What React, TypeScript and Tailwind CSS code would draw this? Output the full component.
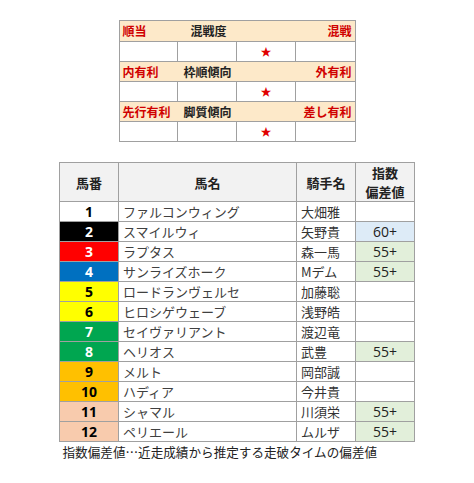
const font = { fontFamily: '"Noto Sans CJK JP", "Noto Sans", sans-serif' };

type Trend = { left: string; title: string; right: string; pad: string };

const trends: Trend[] = [
  { left: "順当", title: "混戦度", right: "混戦", pad: "w-[68px]" },
  { left: "内有利", title: "枠順傾向", right: "外有利", pad: "w-[61px]" },
  { left: "先行有利", title: "脚質傾向", right: "差し有利", pad: "w-[61px]" },
];

type Horse = { no: number; name: string; jockey: string; idx?: string; cls: string };

const horses: Horse[] = [
  { no: 1, name: "ファルコンウィング", jockey: "大畑雅", cls: "bg-white text-black" },
  { no: 2, name: "スマイルウィ", jockey: "矢野貴", idx: "60+", cls: "bg-black text-white" },
  { no: 3, name: "ラプタス", jockey: "森一馬", idx: "55+", cls: "bg-[#ff0000] text-white" },
  { no: 4, name: "サンライズホーク", jockey: "Mデム", idx: "55+", cls: "bg-[#0070c0] text-white" },
  { no: 5, name: "ロードランヴェルセ", jockey: "加藤聡", cls: "bg-[#ffff00] text-black" },
  { no: 6, name: "ヒロシゲウェーブ", jockey: "浅野皓", cls: "bg-[#ffff00] text-black" },
  { no: 7, name: "セイヴァリアント", jockey: "渡辺竜", cls: "bg-[#00a650] text-white" },
  { no: 8, name: "ヘリオス", jockey: "武豊", idx: "55+", cls: "bg-[#00a650] text-white" },
  { no: 9, name: "メルト", jockey: "岡部誠", cls: "bg-[#ffc000] text-black" },
  { no: 10, name: "ハディア", jockey: "今井貴", cls: "bg-[#ffc000] text-black" },
  { no: 11, name: "シャマル", jockey: "川須栄", idx: "55+", cls: "bg-[#f8cbad] text-black" },
  { no: 12, name: "ペリエール", jockey: "ムルザ", idx: "55+", cls: "bg-[#f8cbad] text-black" },
];

const cell = "border border-[#a0a0a0] h-[20px] p-0";

export default function App() {
  return (
    <div className="min-h-screen bg-white flex flex-col items-center pt-[20px]" style={font}>
      {/* trend table */}
      <div className="w-[237px] border border-[#a0a0a0]">
        {trends.map((t, i) => (
          <div key={i}>
            <div
              className={`h-[20px] bg-[#fde9c9] flex items-center px-[3px] text-[12px] font-bold leading-none ${
                i > 0 ? "border-t border-[#a0a0a0]" : ""
              }`}
            >
              <span className={`${t.pad} text-[#d00000]`}>{t.left}</span>
              <span className="text-[#222]">{t.title}</span>
              <span className="ml-auto text-[#d00000]">{t.right}</span>
            </div>
            <div className="h-[20px] grid grid-cols-4 border-t border-[#a0a0a0]">
              <div className="border-r border-[#a0a0a0]" />
              <div className="border-r border-[#a0a0a0]" />
              <div className="border-r border-[#a0a0a0] flex items-center justify-center text-[#e00000] text-[11px] leading-none">
                ★
              </div>
              <div />
            </div>
          </div>
        ))}
      </div>

      {/* horse table */}
      <table className="mt-[20px] w-[355px] border-collapse table-fixed text-[13px] leading-none">
        <colgroup>
          <col className="w-[59px]" />
          <col className="w-[178px]" />
          <col className="w-[59px]" />
          <col className="w-[59px]" />
        </colgroup>
        <thead>
          <tr className="bg-[#f2f2f2] font-bold text-[#222] h-[39px]">
            <th className="border border-[#a0a0a0] p-0">馬番</th>
            <th className="border border-[#a0a0a0] p-0">馬名</th>
            <th className="border border-[#a0a0a0] p-0">騎手名</th>
            <th className="border border-[#a0a0a0] p-0 leading-[19px]">
              指数
              <br />
              偏差値
            </th>
          </tr>
        </thead>
        <tbody>
          {horses.map((h) => (
            <tr key={h.no} className="h-[20px]">
              <td
                className={`${cell} ${h.cls} text-center font-bold text-[14px]`}
                style={{ fontFamily: '"Open Sans", "Noto Sans", sans-serif' }}
              >
                {h.no}
              </td>
              <td className={`${cell} pl-[4px] text-[#404040]`}>{h.name}</td>
              <td className={`${cell} pl-[4px] text-[#333]`}>{h.jockey}</td>
              <td
                className={`${cell} text-center text-[14px] text-[#222] ${
                  h.idx === "60+" ? "bg-[#ddebf7]" : h.idx ? "bg-[#e2efda]" : "bg-white"
                }`}
                style={{ fontFamily: '"Open Sans", "Noto Sans", sans-serif' }}
              >
                {h.idx ?? ""}
              </td>
            </tr>
          ))}
        </tbody>
      </table>
      <p className="w-[355px] pl-[3px] mt-[4px] text-[12.6px] leading-none text-[#222]">
        指数偏差値…近走成績から推定する走破タイムの偏差値
      </p>
    </div>
  );
}
